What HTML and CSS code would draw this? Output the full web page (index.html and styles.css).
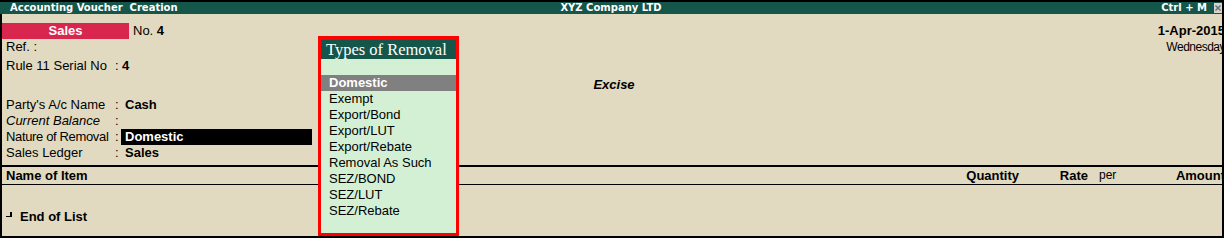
FILE: index.html
```html
<!DOCTYPE html>
<html lang="en">
<head>
<meta charset="utf-8">
<title>Accounting Voucher Creation</title>
<link rel="stylesheet" href="styles.css">
</head>
<body>
<div class="titlebar">
  <span class="t-left">Accounting Voucher  Creation</span>
  <span class="t-center">XYZ Company LTD</span>
  <span class="t-right">Ctrl + M
    <span class="close"><svg width="8" height="10" viewBox="0 0 8 10"><path d="M1.5 2.5 L6.5 7.5 M6.5 2.5 L1.5 7.5" stroke="#6a6a6a" stroke-width="1.4" fill="none"/></svg></span>
  </span>
</div>
<div class="screen">
  <div class="head">
    <div class="head-left">
      <div class="sales-row">
        <span class="vtype">Sales</span>
        <span class="vno">No. <b>4</b></span>
      </div>
      <div class="ref-row">Ref. :</div>
      <div class="field rule-row">
        <span class="lbl">Rule 11 Serial No</span><span class="colon">:</span><span class="val val-tight"><b>4</b></span>
      </div>
    </div>
    <div class="head-right">
      <div class="date">1-Apr-2015</div>
      <div class="day">Wednesday</div>
    </div>
  </div>
  <div class="excise">Excise</div>
  <div class="party">
    <div class="field">
      <span class="lbl">Party's A/c Name</span><span class="colon">:</span><span class="val"><b>Cash</b></span>
    </div>
    <div class="field">
      <span class="lbl"><i>Current Balance</i></span><span class="colon">:</span><span class="val"></span>
    </div>
    <div class="field">
      <span class="lbl lbl-tight">Nature of Removal</span><span class="colon">:</span><span class="val active"><b>Domestic</b></span>
    </div>
    <div class="field">
      <span class="lbl">Sales Ledger</span><span class="colon">:</span><span class="val"><b>Sales</b></span>
    </div>
  </div>
  <div class="items-head">
    <span class="c-name">Name of Item</span>
    <span class="c-qty">Quantity</span>
    <span class="c-rate">Rate</span>
    <span class="c-per">per</span>
    <span class="c-amt">Amount</span>
  </div>
  <div class="items-body">
    <div class="eol"><span class="eol-mark"></span><b>End of List</b></div>
  </div>

  <div class="popup">
    <div class="popup-title">Types of Removal</div>
    <ul class="popup-list">
      <li class="selected">Domestic</li>
      <li>Exempt</li>
      <li>Export/Bond</li>
      <li>Export/LUT</li>
      <li>Export/Rebate</li>
      <li>Removal As Such</li>
      <li>SEZ/BOND</li>
      <li>SEZ/LUT</li>
      <li>SEZ/Rebate</li>
    </ul>
  </div>
</div>
</body>
</html>
```
FILE: styles.css
```css
* {
  box-sizing: border-box;
  margin: 0;
  padding: 0;
}

body {
  margin: 0;
  width: 1224px;
  height: 238px;
  overflow: hidden;
  background: #000;
  font-family: "Liberation Sans", Arial, sans-serif;
  font-size: 13px;
  color: #000;
}

.titlebar {
  height: 14px;
  border-top: 2px solid #000;
  border-right: 2px solid #000;
  background: #14564a;
  color: #fff;
  display: grid;
  grid-template-columns: 1fr auto 1fr;
  align-items: center;
  font-family: "DejaVu Sans", Verdana, sans-serif;
  font-weight: bold;
  font-size: 10px;
  line-height: 12px;
}

.t-left {
  padding-left: 10px;
  white-space: pre;
}

.t-right {
  justify-self: end;
  display: flex;
  align-items: center;
  gap: 7px;
}

.close {
  display: block;
  width: 8px;
  height: 10px;
  background: #d4d4d4;
}

.close svg {
  display: block;
}

.screen {
  position: relative;
  height: 224px;
  background: #e1dac0;
  border: 2px solid #000;
  border-top: 0;
  overflow: hidden;
}

.head {
  display: flex;
  justify-content: space-between;
  padding-top: 9px;
  margin-right: -3px;
  line-height: 16px;
}

.sales-row {
  display: flex;
  align-items: center;
  height: 16px;
}

.vtype {
  width: 127px;
  height: 16px;
  background: #d9264f;
  color: #fff;
  font-weight: bold;
  text-align: center;
  line-height: 16px;
}

.vno {
  margin-left: 4px;
}

.ref-row {
  padding-left: 4px;
}

.rule-row {
  margin-top: 3px;
}

.head-right {
  text-align: right;
}

.date {
  font-weight: bold;
}

.day {
  font-size: 12px;
  letter-spacing: -0.5px;
}

.excise {
  margin-top: 3px;
  padding-left: 4px;
  text-align: center;
  font-weight: bold;
  font-style: italic;
  line-height: 16px;
}

.party {
  margin-top: 4px;
}

.field {
  display: grid;
  grid-template-columns: 109px 6px 191px;
  padding-left: 4px;
  height: 16px;
  line-height: 16px;
  white-space: nowrap;
}

.lbl-tight {
  letter-spacing: -0.35px;
}

.val {
  padding-left: 4px;
}

.val-tight {
  padding-left: 1px;
}

.val.active {
  background: #000;
  color: #fff;
}

.items-head {
  margin-top: 4px;
  margin-right: -3px;
  border-top: 2px solid #000;
  border-bottom: 1px solid #000;
  padding-left: 4px;
  display: grid;
  grid-template-columns: 1fr 79px 69px 52px 85px;
  line-height: 17px;
  font-weight: bold;
  white-space: nowrap;
}

.c-qty,
.c-rate,
.c-amt {
  text-align: right;
}

.c-per {
  padding-left: 11px;
  font-weight: normal;
  font-size: 12px;
}

.items-body {
  padding-top: 24px;
  padding-left: 4px;
}

.eol {
  display: flex;
  align-items: center;
  height: 16px;
  line-height: 16px;
}

.eol-mark {
  display: block;
  width: 6px;
  height: 5px;
  border-right: 2px solid #000;
  border-bottom: 1px solid #000;
  margin-top: -5px;
  margin-right: 8px;
}

.popup {
  position: absolute;
  left: 316px;
  top: 22px;
  width: 141px;
  bottom: 0;
  border: 3px solid #ff0000;
  border-top-width: 4px;
  background: #d4f0d4;
}

.popup-title {
  height: 19px;
  background: #14564a;
  color: #fff;
  font-family: "Liberation Serif", "Times New Roman", serif;
  font-size: 16.5px;
  line-height: 19px;
  padding-left: 5px;
  white-space: nowrap;
}

.popup-list {
  list-style: none;
  padding-top: 16px;
}

.popup-list li {
  height: 16px;
  line-height: 16px;
  padding-left: 8px;
  white-space: nowrap;
}

.popup-list li.selected {
  background: #808080;
  color: #fff;
  font-weight: bold;
}
```
